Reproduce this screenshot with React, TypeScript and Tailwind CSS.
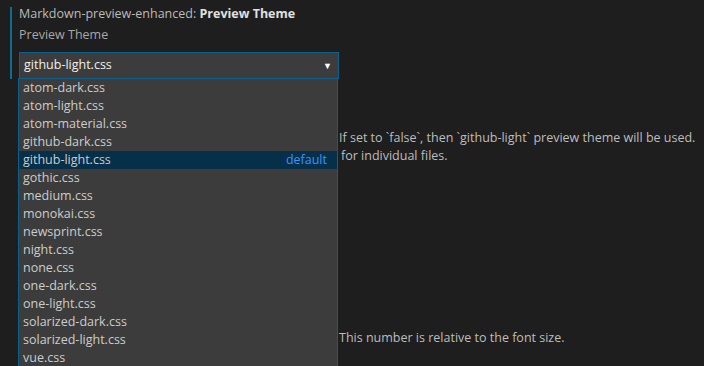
import React from 'react';

const THEMES = [
  'atom-dark.css',
  'atom-light.css',
  'atom-material.css',
  'github-dark.css',
  'github-light.css',
  'gothic.css',
  'medium.css',
  'monokai.css',
  'newsprint.css',
  'night.css',
  'none.css',
  'one-dark.css',
  'one-light.css',
  'solarized-dark.css',
  'solarized-light.css',
  'vue.css',
];

const App: React.FC = () => {
  const selected = 'github-light.css';

  return (
    <div
      className="relative w-[704px] h-[366px] overflow-hidden whitespace-nowrap bg-[#1e1e1e] text-[12.5px] text-[#cccccc]"
      style={{ fontFamily: '"Segoe UI", "Open Sans", "Noto Sans", sans-serif' }}
    >
      {/* focused setting */}
      <div className="ml-[10px] mt-[7px] h-[72px] border-l-2 border-[#0e6b93] pl-[7px]">
        <div className="leading-[14px] text-[#bbbbbb]">
          Markdown-preview-enhanced: <span className="font-bold text-[#e0e0e0]">Preview Theme</span>
        </div>
        <div className="mt-[7px] leading-[14px] text-[#a8a8a8]">Preview Theme</div>
        <div className="mt-[10px] flex h-[27px] w-[320px] items-center justify-between border border-[#0e5f8c] bg-[#3c3c3c] pl-[4px] pr-[6px] text-[#f0f0f0]">
          <span>{selected}</span>
          <span className="text-[9px] text-white">▼</span>
        </div>
      </div>

      {/* settings text underneath the dropdown */}
      <div className="ml-[339px] mt-[50px] leading-[18px] text-[#bdbdbd]">
        <div>If set to `false`, then `github-light` preview theme will be used.</div>
        <div className="pl-[2px]">for individual files.</div>
      </div>
      <div className="ml-[339px] mt-[164px] leading-[18px] text-[#bdbdbd]">
        This number is relative to the font size.
      </div>

      {/* open dropdown */}
      <div className="absolute left-[18px] top-[78px] w-[320px] border-x border-t border-[#0e5f8c] bg-[#3c3c3c]">
        {THEMES.map(t => (
          <div
            key={t}
            className={`flex h-[18px] items-center justify-between pl-[4px] pr-[10px] ${
              t === selected ? 'bg-[#062f4a]' : ''
            }`}
          >
            <span>{t}</span>
            {t === selected && <span className="text-[#3794ff]">default</span>}
          </div>
        ))}
      </div>
    </div>
  );
};

export default App;
